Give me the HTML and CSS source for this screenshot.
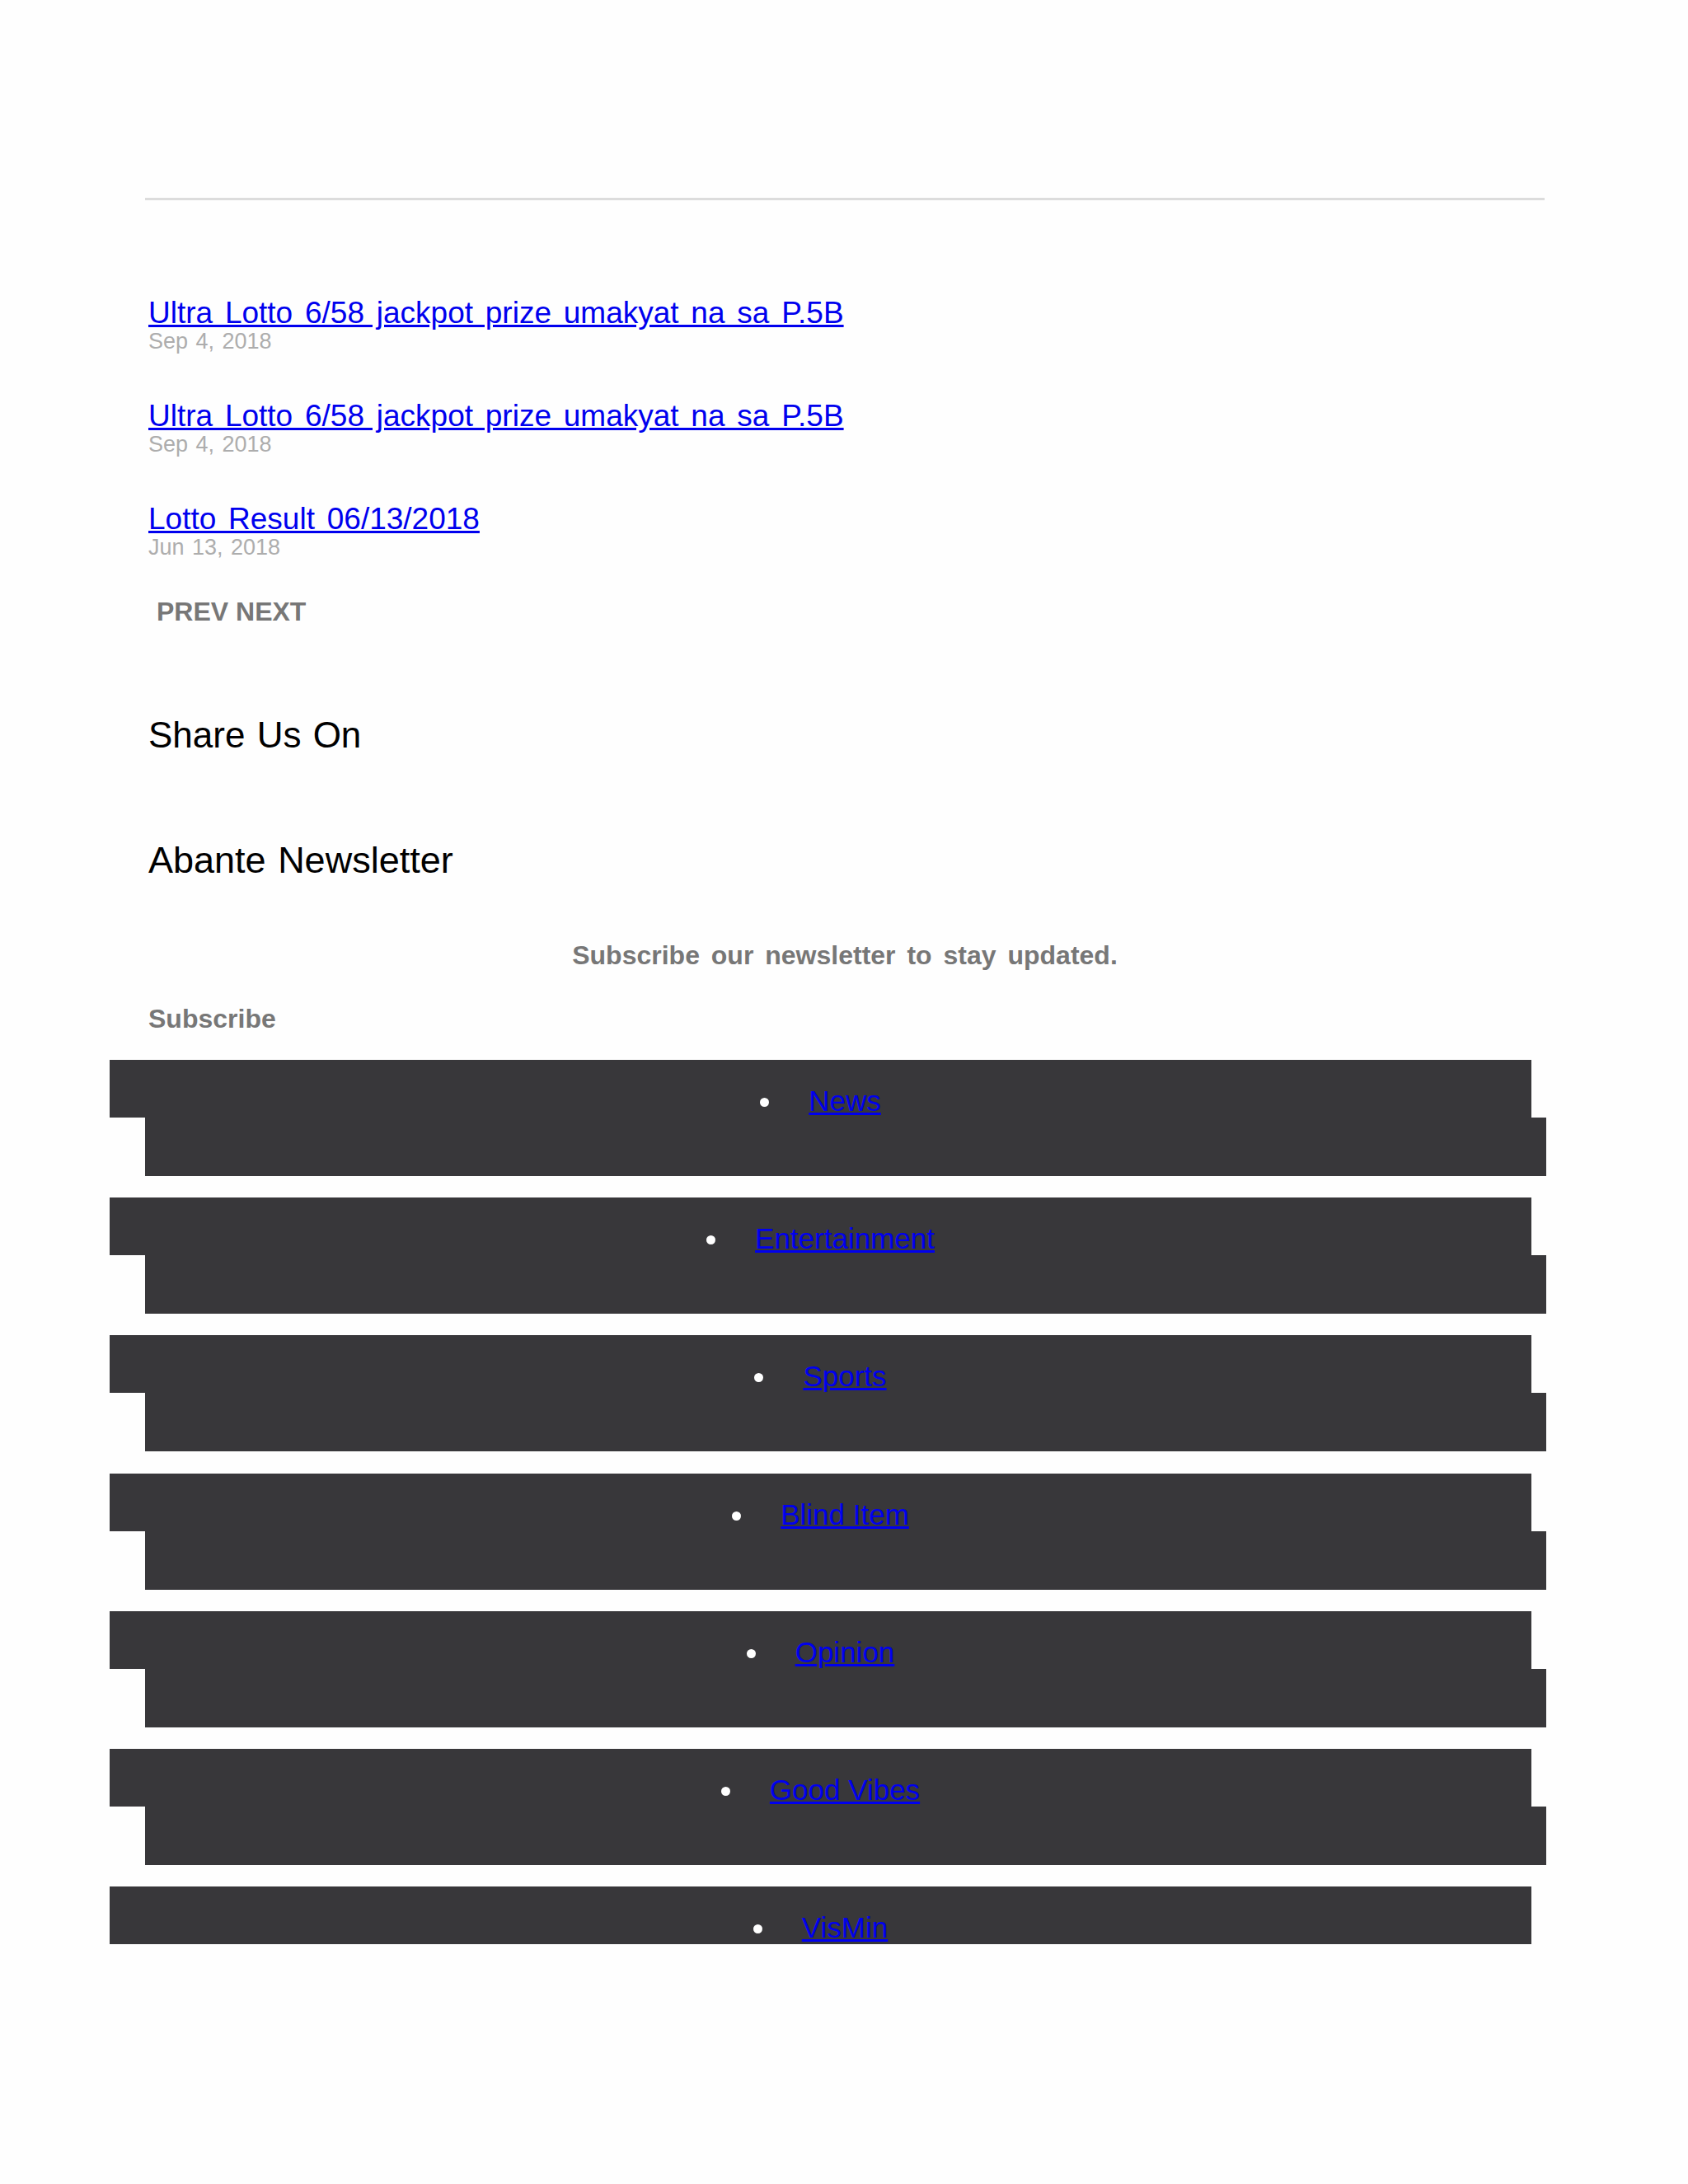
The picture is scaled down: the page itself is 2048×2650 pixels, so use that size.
FILE: index.html
```html
<!DOCTYPE html>
<html lang="en">
<head>
<meta charset="utf-8">
<title>Abante</title>
<link rel="stylesheet" href="styles.css">
</head>
<body>
<div class="page">
  <div class="rule"></div>
  <div class="content">
    <div class="posts">
      <div class="post">
        <a class="post-title" href="#">Ultra Lotto 6/58 jackpot prize umakyat na sa P.5B</a>
        <div class="post-date">Sep 4, 2018</div>
      </div>
      <div class="post">
        <a class="post-title" href="#">Ultra Lotto 6/58 jackpot prize umakyat na sa P.5B</a>
        <div class="post-date">Sep 4, 2018</div>
      </div>
      <div class="post">
        <a class="post-title" href="#">Lotto Result 06/13/2018</a>
        <div class="post-date">Jun 13, 2018</div>
      </div>
    </div>
    <div class="pager"><span class="pager-btn">PREV</span> <span class="pager-btn">NEXT</span></div>
    <h3 class="heading share">Share Us On</h3>
    <h3 class="heading newsletter">Abante Newsletter</h3>
    <p class="news-lead">Subscribe our newsletter to stay updated.</p>
    <div class="subscribe">Subscribe</div>
  </div>
  <div class="menu">
    <div class="menu-item"><div class="menu-top"><a href="#">News</a></div><div class="menu-sub"></div></div>
    <div class="menu-item"><div class="menu-top"><a href="#">Entertainment</a></div><div class="menu-sub"></div></div>
    <div class="menu-item"><div class="menu-top"><a href="#">Sports</a></div><div class="menu-sub"></div></div>
    <div class="menu-item"><div class="menu-top"><a href="#">Blind Item</a></div><div class="menu-sub"></div></div>
    <div class="menu-item"><div class="menu-top"><a href="#">Opinion</a></div><div class="menu-sub"></div></div>
    <div class="menu-item"><div class="menu-top"><a href="#">Good Vibes</a></div><div class="menu-sub"></div></div>
    <div class="menu-item"><div class="menu-top"><a href="#">VisMin</a></div></div>
  </div>
</div>
</body>
</html>
```

FILE: styles.css
```css
html, body {
  margin: 0;
  padding: 0;
  background: #fefefe;
}

body {
  font-family: "Liberation Sans", Arial, sans-serif;
  color: #000;
}

.page {
  margin-left: 176px;
  width: 1698px;
  padding-top: 240px;
}

.rule {
  height: 3px;
  background: #dcdcdc;
}

.content {
  padding: 0 4px;
}

.posts {
  margin-top: 116px;
}

.post {
  margin-bottom: 55px;
}

.post:last-child {
  margin-bottom: 0;
}

.post-title {
  display: block;
  font-size: 37px;
  line-height: 41px;
  color: #0000ee;
  text-decoration: underline;
  word-spacing: 4.5px;
}

.post-date {
  font-size: 27px;
  line-height: 29px;
  color: #adadad;
  word-spacing: 2px;
}

.pager {
  margin-top: 45px;
  padding-left: 10px;
  font-size: 32px;
  line-height: 36px;
  font-weight: bold;
  color: #777;
}

.heading {
  margin: 0;
  font-size: 44px;
  line-height: 51px;
  font-weight: normal;
  color: #000;
  word-spacing: 2px;
}

.share {
  margin-top: 106px;
}

.newsletter {
  margin-top: 101px;
  font-size: 45px;
}

.news-lead {
  margin: 72px 0 0;
  text-align: center;
  font-size: 32px;
  line-height: 36px;
  font-weight: bold;
  color: #777;
  word-spacing: 5px;
}

.subscribe {
  margin-top: 41px;
  font-size: 32px;
  line-height: 36px;
  font-weight: bold;
  color: #777;
}

.menu {
  margin-top: 32px;
}

.menu-item {
  margin-bottom: 26.2px;
}

.menu-top {
  display: list-item;
  list-style: disc inside;
  box-sizing: border-box;
  height: 70px;
  margin-left: -43px;
  width: 1725px;
  padding-top: 30px;
  background: #38373a;
  color: #fff;
  text-align: center;
  font-size: 35px;
  line-height: 40px;
}

.menu-top a {
  margin-left: 12px;
  color: #0000ee;
  text-decoration: underline;
}

.menu-sub {
  height: 71px;
  width: 1700px;
  background: #38373a;
}
```
